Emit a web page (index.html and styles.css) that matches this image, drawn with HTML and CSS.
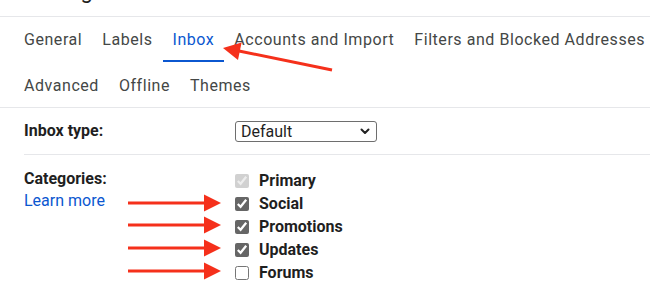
FILE: index.html
```html
<!DOCTYPE html>
<html lang="en">
<head>
  <meta charset="UTF-8" />
  <meta name="viewport" content="width=device-width, initial-scale=1" />
  <title>Settings</title>
  <link rel="stylesheet" href="styles.css">
</head>
<body>
  <div class="page">
    <header class="title-bar">
      <h1>Settings</h1>
    </header>

    <nav class="tabs">
      <div class="tab-row">
        <a class="tab">General</a>
        <a class="tab">Labels</a>
        <a class="tab active">Inbox</a>
        <a class="tab">Accounts and Import</a>
        <a class="tab">Filters and Blocked Addresses</a>
      </div>
      <div class="tab-row second">
        <a class="tab">Advanced</a>
        <a class="tab">Offline</a>
        <a class="tab">Themes</a>
      </div>
    </nav>

    <section class="settings">
      <div class="row row-inbox">
        <div class="label">Inbox type:</div>
        <div class="value">
          <span class="select">
            <select>
              <option>Default</option>
              <option>Important first</option>
              <option>Unread first</option>
            </select>
            <svg class="chevron" width="10" height="7" viewBox="0 0 10 7">
              <path d="M1.5 1.5 L5 5 L8.5 1.5" fill="none" stroke="#222" stroke-width="2" stroke-linecap="round" stroke-linejoin="round"/>
            </svg>
          </span>
        </div>
      </div>

      <div class="row row-cats">
        <div class="label">
          Categories:<br>
          <a class="link">Learn more</a>
        </div>
        <div class="value">
          <ul class="cats">
            <li><input type="checkbox" checked disabled><span>Primary</span></li>
            <li><input type="checkbox" checked><span>Social</span></li>
            <li><input type="checkbox" checked><span>Promotions</span></li>
            <li><input type="checkbox" checked><span>Updates</span></li>
            <li><input type="checkbox"><span>Forums</span></li>
          </ul>
        </div>
      </div>
    </section>

    <!-- red annotation arrows drawn over the screenshot -->
    <svg class="marks" width="650" height="301" viewBox="0 0 650 301">
      <g fill="#f5301b" stroke="#f5301b">
        <line x1="332" y1="70" x2="239" y2="51" stroke-width="3"/>
        <polygon points="223,48 241.6,42.6 238,60" stroke="none"/>

        <line x1="128" y1="203" x2="208" y2="203" stroke-width="3"/>
        <polygon points="204,194.5 221,203 204,211.5" stroke="none"/>

        <line x1="128" y1="225" x2="208" y2="225" stroke-width="3"/>
        <polygon points="204,216.5 221,225 204,233.5" stroke="none"/>

        <line x1="128" y1="248" x2="208" y2="248" stroke-width="3"/>
        <polygon points="204,239.5 221,248 204,256.5" stroke="none"/>

        <line x1="128" y1="271" x2="208" y2="271" stroke-width="3"/>
        <polygon points="204,262.5 221,271 204,279.5" stroke="none"/>
      </g>
    </svg>
  </div>
</body>
</html>
```

FILE: styles.css
```css
body {
  margin: 0;
  background: #fff;
  font-family: Roboto, "Liberation Sans", sans-serif;
  color: #1f1f1f;
}
.page {
  position: relative;
  width: 650px;
  height: 301px;
  overflow: hidden;
}
.title-bar {
  height: 16px;
  overflow: hidden;
  border-bottom: 1px solid #e6e7ea;
}
.title-bar h1 {
  margin: -23px 0 0 24px;
  font-size: 22px;
  font-weight: 400;
  line-height: 28px;
  color: #1f1f1f;
}
.tabs {
  padding-left: 14px;
  border-bottom: 1px solid #e6e7ea;
}
.tab-row {
  display: flex;
  white-space: nowrap;
}
.tab {
  box-sizing: border-box;
  height: 45px;
  line-height: 46px;
  padding: 0 10px;
  font-size: 16px;
  letter-spacing: 0.55px;
  color: #444746;
  border-bottom: 2px solid transparent;
  cursor: pointer;
}
.tab-row.second .tab {
  line-height: 48px;
}
.tab.active {
  color: #0b57d0;
  border-bottom-color: #0b57d0;
}
.settings {
  padding-left: 24px;
}
.row {
  display: grid;
  grid-template-columns: 211px 1fr;
  border-bottom: 1px solid #e6e7ea;
}
.row-inbox {
  height: 46px;
  align-items: center;
}
.row-cats {
  border-bottom: none;
  padding-top: 13px;
}
.label {
  font-size: 16px;
  font-weight: 700;
  line-height: 22px;
  color: #1f1f1f;
}
.link {
  font-weight: 400;
  color: #0b57d0;
  cursor: pointer;
}
.select {
  position: relative;
  display: inline-block;
}
.select select {
  appearance: none;
  box-sizing: border-box;
  width: 142px;
  height: 21px;
  padding: 0 0 0 5px;
  border: 1px solid #6e6e6e;
  border-radius: 3px;
  background: #fff;
  font-family: Roboto, "Liberation Sans", sans-serif;
  font-size: 16px;
  color: #1f1f1f;
}
.chevron {
  position: absolute;
  right: 7px;
  top: 7px;
  pointer-events: none;
}
.cats {
  list-style: none;
  margin: 1px 0 0;
  padding: 0;
}
.cats li {
  display: flex;
  align-items: center;
  height: 23px;
  font-size: 16px;
  font-weight: 700;
}
.cats input {
  width: 14px;
  height: 14px;
  margin: 0 10px 0 0;
  accent-color: #666;
}
.marks {
  position: absolute;
  left: 0;
  top: 0;
  pointer-events: none;
}
```
